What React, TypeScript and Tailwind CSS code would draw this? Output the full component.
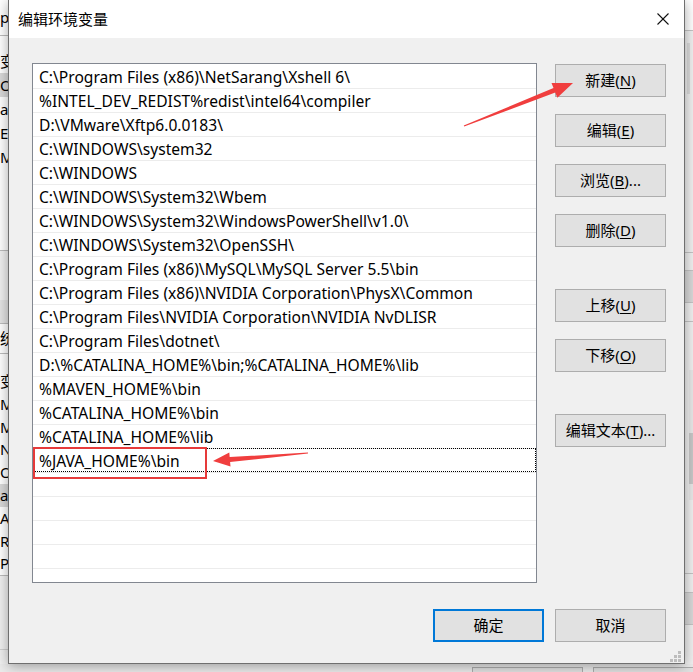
import React from "react";

const FONT = "font-['Noto_Sans','Noto_Sans_CJK_SC',sans-serif]";

const items = [
  "C:\\Program Files (x86)\\NetSarang\\Xshell 6\\",
  "%INTEL_DEV_REDIST%redist\\intel64\\compiler",
  "D:\\VMware\\Xftp6.0.0183\\",
  "C:\\WINDOWS\\system32",
  "C:\\WINDOWS",
  "C:\\WINDOWS\\System32\\Wbem",
  "C:\\WINDOWS\\System32\\WindowsPowerShell\\v1.0\\",
  "C:\\WINDOWS\\System32\\OpenSSH\\",
  "C:\\Program Files (x86)\\MySQL\\MySQL Server 5.5\\bin",
  "C:\\Program Files (x86)\\NVIDIA Corporation\\PhysX\\Common",
  "C:\\Program Files\\NVIDIA Corporation\\NVIDIA NvDLISR",
  "C:\\Program Files\\dotnet\\",
  "D:\\%CATALINA_HOME%\\bin;%CATALINA_HOME%\\lib",
  "%MAVEN_HOME%\\bin",
  "%CATALINA_HOME%\\bin",
  "%CATALINA_HOME%\\lib",
  "%JAVA_HOME%\\bin",
];

function Btn({ children, primary }: { children: React.ReactNode; primary?: boolean }) {
  return (
    <div
      className={
        primary
          ? "w-[111px] h-[33px] flex items-center justify-center bg-[#e1e1e1] border-2 border-[#0078d7] text-[15px] text-black"
          : "w-[111px] h-[33px] flex items-center justify-center bg-[#e1e1e1] border border-[#adadad] text-[15px] text-black"
      }
    >
      <span className="leading-none">{children}</span>
    </div>
  );
}

function U({ c }: { c: string }) {
  return <span className="underline underline-offset-2 decoration-1">{c}</span>;
}

function LeftStrip() {
  const row = "h-[24px] flex items-center whitespace-nowrap text-[15px] text-black";
  return (
    <div className="w-[8px] h-[664px] shrink-0 overflow-hidden flex flex-col bg-[#f0f0f0]">
      <div className="h-[35px] bg-white flex items-center whitespace-nowrap text-[15px] text-black">p&apos;</div>
      <div className="h-px bg-[#bcbcbc]" />
      <div className="bg-white flex flex-col pt-[13px] h-[214px]">
        <div className={row}>变量</div>
        <div className={row + " bg-[#d9d9d9]"}>Or</div>
        <div className={row}>a</div>
        <div className={row}>E</div>
        <div className={row}>M</div>
      </div>
      <div className="h-px bg-[#bcbcbc]" />
      <div className="h-[49px] bg-[#f0f0f0]" />
      <div className="h-[23px] bg-[#e4e4e4]" />
      <div className="h-px bg-[#bcbcbc]" />
      <div className="h-[29px] bg-white flex items-center whitespace-nowrap text-[15px] text-black">统</div>
      <div className="h-px bg-[#bcbcbc]" />
      <div className="bg-white flex flex-col pt-[16px] h-[221px] overflow-hidden">
        <div className={row}>变量</div>
        <div className={row}>MA</div>
        <div className={row}>MI</div>
        <div className={row}>NU</div>
        <div className={row}>OS</div>
        <div className={row + " bg-[#d9d9d9]"}>a</div>
        <div className={row}>A</div>
        <div className={row}>R</div>
        <div className={row}>P</div>
      </div>
      <div className="h-px bg-[#bcbcbc]" />
      <div className="h-[73px] bg-[#f0f0f0]" />
      <div className="h-px bg-[#d0d0d0]" />
      <div className="flex-1 bg-[#f0f0f0]" />
    </div>
  );
}

function RightStrip() {
  return (
    <div className="w-[8px] h-[664px] shrink-0 overflow-hidden flex flex-col bg-[#f0f0f0]">
      <div className="h-[30px] bg-white" />
      <div className="h-px bg-[#c4c4c4]" />
      <div className="h-[221px] bg-[#f0f0f0] flex flex-col pl-[2px] pt-[12px]">
        <div className="w-[3px] h-[51px] bg-[#dcdcdc]" />
      </div>
      <div className="h-px bg-[#c4c4c4]" />
      <div className="h-[17px] bg-[#f0f0f0]" />
      <div className="h-px bg-[#c4c4c4]" />
      <div className="h-[31px] bg-[#d9d9d9]" />
      <div className="h-px bg-[#c4c4c4]" />
      <div className="h-[18px] bg-[#f0f0f0]" />
      <div className="h-px bg-[#c4c4c4]" />
      <div className="h-[251px] bg-[#f0f0f0] flex flex-col items-end pt-[48px]">
        <div className="w-[4px] h-[130px] bg-[#e8e8e8] flex flex-col pt-[63px]">
          <div className="w-[4px] h-[51px] bg-[#c8c8c8]" />
        </div>
      </div>
      <div className="h-px bg-[#c4c4c4]" />
      <div className="h-[18px] bg-[#f0f0f0]" />
      <div className="h-px bg-[#c4c4c4]" />
      <div className="h-[31px] bg-[#d9d9d9]" />
      <div className="h-px bg-[#c4c4c4]" />
      <div className="flex-1 bg-[#f0f0f0]" />
    </div>
  );
}

function BottomStrip() {
  return (
    <div className="h-[8px] bg-[#ebebeb] flex pt-[3px] overflow-hidden">
      <div className="w-[472px] shrink-0" />
      <div className="w-[111px] h-[10px] shrink-0 bg-[#e1e1e1] border border-[#adadad]" />
      <div className="w-[10px] shrink-0" />
      <div className="w-[111px] h-[10px] shrink-0 bg-[#e1e1e1] border border-[#adadad]" />
    </div>
  );
}

function Dialog() {
  return (
    <div className="w-[677px] h-[664px] shrink-0 relative z-10 flex flex-col border-x border-b border-[#6f6f6f] shadow-[0_2px_12px_rgba(0,0,0,0.35)]">
      <div className="h-[38px] bg-white flex items-center justify-between pl-[9px] pr-[14px]">
        <span className="text-[15px] text-black leading-none">编辑环境变量</span>
        <svg width="14" height="14" viewBox="0 0 14 14">
          <line x1="1.5" y1="1.5" x2="12.5" y2="12.5" stroke="#111" strokeWidth="1.1" />
          <line x1="12.5" y1="1.5" x2="1.5" y2="12.5" stroke="#111" strokeWidth="1.1" />
        </svg>
      </div>
      <div className="flex-1 bg-[#f0f0f0] flex flex-col pt-[25px] pl-[23px] pr-[18px] pb-[21px]">
        <div className="flex gap-[18px]">
          <div className="w-[505px] h-[520px] bg-white border border-[#828790] flex flex-col pt-px overflow-hidden">
            {items.map((t, i) => (
              <div
                key={i}
                className="h-[24px] shrink-0 border-b border-[#ececec] flex items-center pl-[6px] pt-[2px] text-[15.6px] text-black whitespace-nowrap relative"
              >
                {i === items.length - 1 && (
                  <div className="absolute left-0 right-0 -top-px bottom-0 border border-dotted border-black" />
                )}
                <span className="leading-none">{t}</span>
              </div>
            ))}
            {[0, 1, 2, 3].map((i) => (
              <div key={"e" + i} className="h-[24px] shrink-0 border-b border-[#ececec]" />
            ))}
          </div>
          <div className="flex flex-col pt-px">
            <Btn>新建(<U c="N" />)</Btn>
            <div className="h-[17px]" />
            <Btn>编辑(<U c="E" />)</Btn>
            <div className="h-[17px]" />
            <Btn>浏览(<U c="B" />)...</Btn>
            <div className="h-[17px]" />
            <Btn>删除(<U c="D" />)</Btn>
            <div className="h-[42px]" />
            <Btn>上移(<U c="U" />)</Btn>
            <div className="h-[17px]" />
            <Btn>下移(<U c="O" />)</Btn>
            <div className="h-[42px]" />
            <Btn>编辑文本(<U c="T" />)...</Btn>
          </div>
        </div>
        <div className="mt-[26px] flex justify-end gap-[11px]">
          <Btn primary>确定</Btn>
          <Btn>取消</Btn>
        </div>
      </div>
    </div>
  );
}

export default function App() {
  return (
    <div className={"w-[693px] h-[672px] relative overflow-hidden bg-[#f0f0f0] flex flex-col " + FONT}>
      <div className="flex h-[664px]">
        <LeftStrip />
        <Dialog />
        <RightStrip />
      </div>
      <BottomStrip />
      <svg className="absolute inset-0 pointer-events-none z-20" width="693" height="672" viewBox="0 0 693 672">
        <polygon
          points="463.8,125.5 553.5,88.0 551.5,82.9 573,83 557.3,97.7 555.3,92.6 464.2,126.5"
          fill="#f03e3e"
        />
        <polygon
          points="308,452.5 229.7,457.1 229.3,452.6 213,461 230.5,466.6 230.1,462.1 308,453.5"
          fill="#f03e3e"
        />
        <rect x="34" y="448" width="172" height="30" fill="none" stroke="#e63a3a" strokeWidth="2" />
        <g fill="#bdbdbd">
          <rect x="678" y="651" width="3" height="3" />
          <rect x="674" y="655" width="3" height="3" />
          <rect x="678" y="655" width="3" height="3" />
          <rect x="670" y="659" width="3" height="3" />
          <rect x="674" y="659" width="3" height="3" />
          <rect x="678" y="659" width="3" height="3" />
        </g>
      </svg>
    </div>
  );
}
